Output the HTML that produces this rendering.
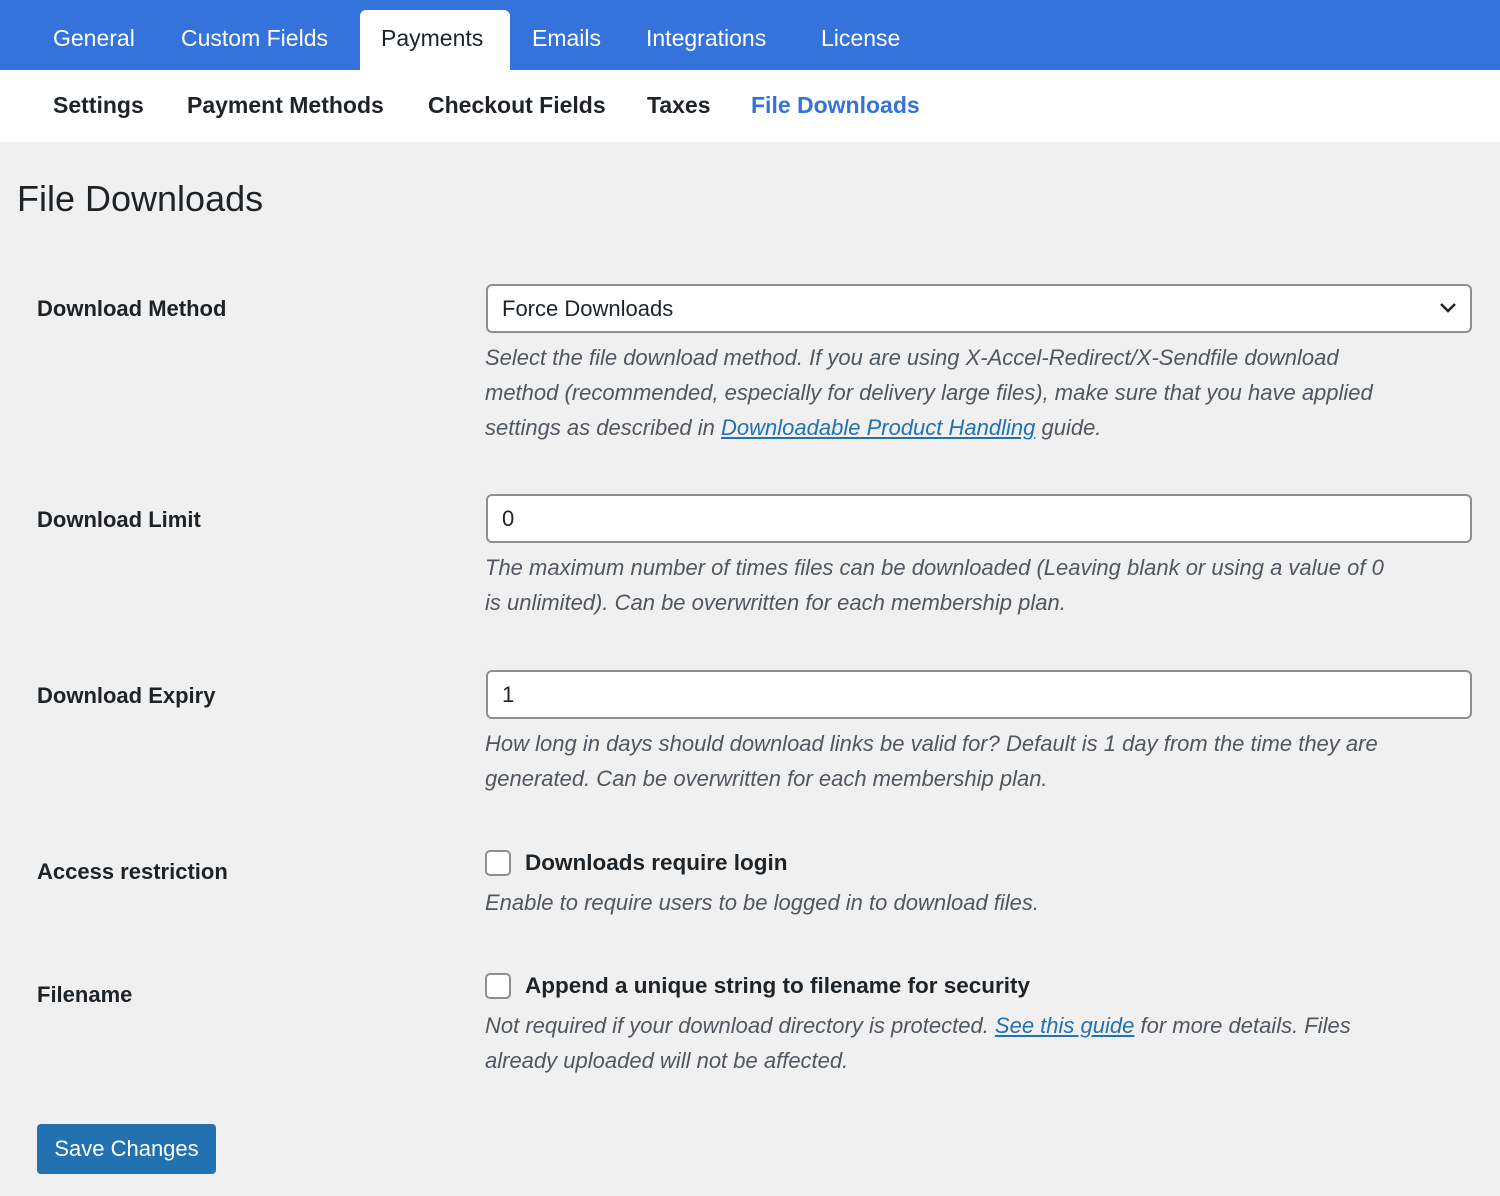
<!DOCTYPE html>
<html><head><style>
*{margin:0;padding:0;box-sizing:border-box}
body{width:1500px;height:1196px;background:#f0f0f1;font-family:"Liberation Sans",sans-serif;color:#1d2327;position:relative;overflow:hidden}
.a{position:absolute;white-space:nowrap}
.top{left:0;top:0;width:1500px;height:70px;background:#3573dc}
.tab{top:25px;font-size:23px;color:#fff}
.sub{left:0;top:70px;width:1500px;height:72px;background:#fff}
.st{top:92px;font-size:23px;font-weight:bold;color:#1d2327}
.lbl{left:37px;font-size:22px;font-weight:bold}
.inp{left:486px;width:986px;height:49px;background:#fff;border:2px solid #8c8f94;border-radius:6px;font-size:22px;padding:10px 14px}
.d{left:485px;font-size:22px;font-style:italic;color:#50575e;line-height:35px}
.d a{color:#2271b1;text-decoration:underline}
.cb{left:485px;width:26px;height:26px;border:2px solid #8c8f94;border-radius:5px;background:#fff}
.cl{left:525px;font-size:22.5px;font-weight:bold}
</style></head><body>
<div class="a top"></div>
<div class="a" style="left:360px;top:10px;width:150px;height:60px;background:#fff;border-radius:6px 6px 0 0"></div>
<div class="a tab" style="left:53px">General</div>
<div class="a tab" style="left:181px">Custom Fields</div>
<div class="a tab" style="left:381px;color:#1d2327">Payments</div>
<div class="a tab" style="left:532px">Emails</div>
<div class="a tab" style="left:646px">Integrations</div>
<div class="a tab" style="left:821px">License</div>
<div class="a sub"></div>
<div class="a st" style="left:53px">Settings</div>
<div class="a st" style="left:187px">Payment Methods</div>
<div class="a st" style="left:428px">Checkout Fields</div>
<div class="a st" style="left:647px">Taxes</div>
<div class="a st" style="left:751px;color:#3573dc">File Downloads</div>
<div class="a" style="left:17px;top:178px;font-size:36px">File Downloads</div>

<div class="a lbl" style="top:296px">Download Method</div>
<div class="a inp" style="top:284px">Force Downloads
<svg style="position:absolute;right:12px;top:15px" width="20" height="14" viewBox="0 0 20 14"><path d="M3 3l7 7 7-7" fill="none" stroke="#1d2327" stroke-width="2.5"/></svg></div>
<div class="a d" style="top:340px">Select the file download method. If you are using X-Accel-Redirect/X-Sendfile download<br>method (recommended, especially for delivery large files), make sure that you have applied<br>settings as described in <a>Downloadable Product Handling</a> guide.</div>

<div class="a lbl" style="top:507px">Download Limit</div>
<div class="a inp" style="top:494px">0</div>
<div class="a d" style="top:550px">The maximum number of times files can be downloaded (Leaving blank or using a value of 0<br>is unlimited). Can be overwritten for each membership plan.</div>

<div class="a lbl" style="top:683px">Download Expiry</div>
<div class="a inp" style="top:670px">1</div>
<div class="a d" style="top:726px">How long in days should download links be valid for? Default is 1 day from the time they are<br>generated. Can be overwritten for each membership plan.</div>

<div class="a lbl" style="top:859px">Access restriction</div>
<div class="a cb" style="top:850px"></div>
<div class="a cl" style="top:850px">Downloads require login</div>
<div class="a d" style="top:885px">Enable to require users to be logged in to download files.</div>

<div class="a lbl" style="top:982px">Filename</div>
<div class="a cb" style="top:973px"></div>
<div class="a cl" style="top:973px">Append a unique string to filename for security</div>
<div class="a d" style="top:1008px">Not required if your download directory is protected. <a>See this guide</a> for more details. Files<br>already uploaded will not be affected.</div>

<div class="a" style="left:37px;top:1124px;width:179px;height:50px;background:#2271b1;border-radius:4px;color:#fff;font-size:22px;text-align:center;line-height:50px">Save Changes</div>
</body></html>
